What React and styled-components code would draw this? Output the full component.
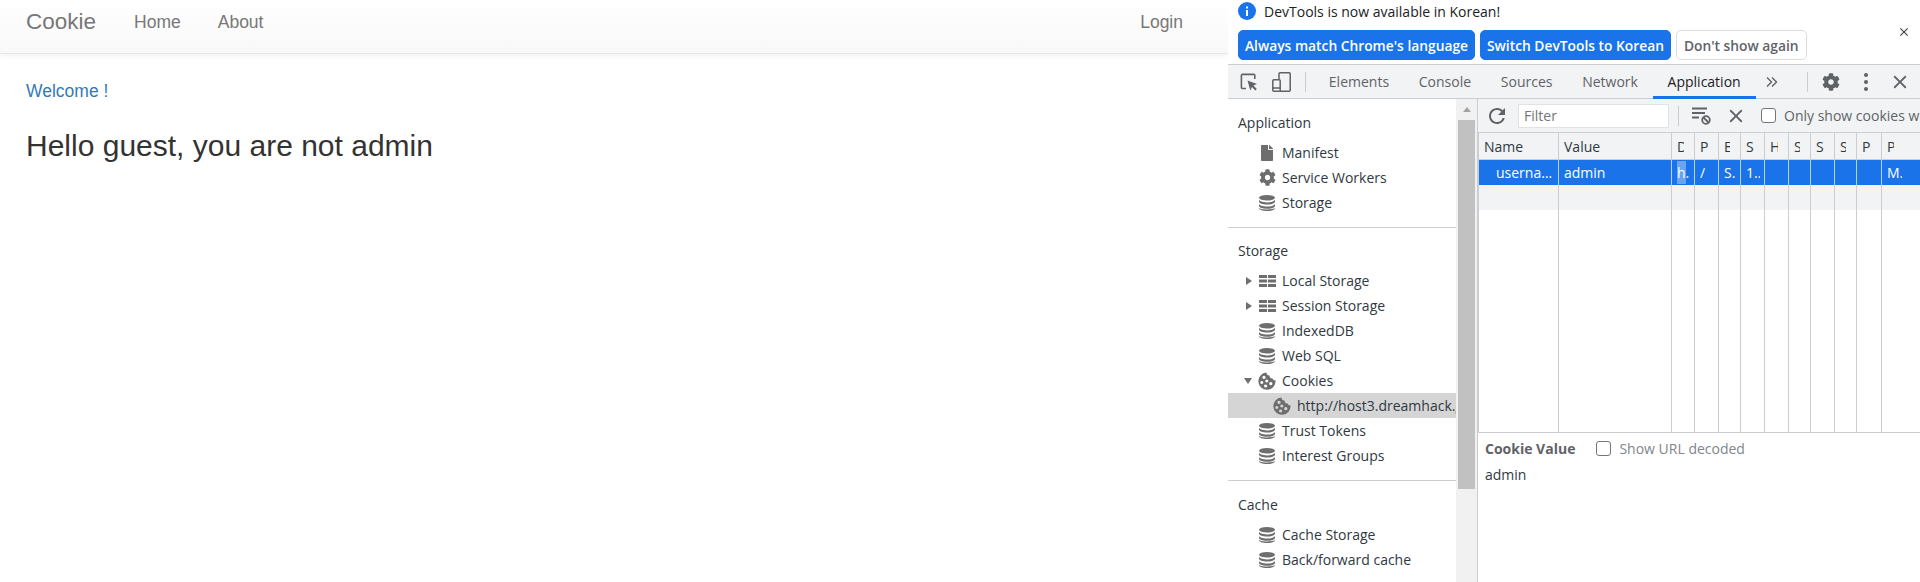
import React from "react"
import styled, { createGlobalStyle } from "styled-components"
import { FaCog, FaFile } from "react-icons/fa"
import { MdClose, MdRefresh } from "react-icons/md"

const GlobalStyle = createGlobalStyle`
  html, body {
    margin: 0;
    padding: 0;
    height: 582px;
    overflow: hidden;
    background: #fff;
  }
  * { box-sizing: border-box; }
`

const devFont = `"Open Sans", "Noto Sans", sans-serif`

const Shell = styled.div`
  display: flex;
  width: 1920px;
  height: 582px;
  overflow: hidden;
`

/* left: the page itself */
const Page = styled.div`
  width: 1228px;
  flex: 0 0 auto;
  font-family: "Liberation Sans", Arial, sans-serif;
  color: #333;
`

const Navbar = styled.div`
  height: 54px;
  display: flex;
  align-items: center;
  padding: 0 45px 9px 26px;
  background: linear-gradient(to bottom, #fff 0%, #f8f8f8 100%);
  border-bottom: 1px solid #e7e7e7;
  box-shadow: 0 1px 6px rgba(0, 0, 0, 0.075);
`

const Brand = styled.a`
  font-size: 22.5px;
  color: #777;
  margin-right: 38px;
  margin-top: -1px;
`

const NavLink = styled.a`
  font-size: 17.5px;
  color: #777;
  margin-right: ${props => (props.$end ? "0" : "37px")};
  margin-left: ${props => (props.$end ? "auto" : "0")};
`

const Content = styled.div`
  padding: 25px 26px 0;
`

const Welcome = styled.p`
  margin: 0 0 25px;
  font-size: 17.5px;
  line-height: 25px;
  color: #337ab7;
`

const Heading = styled.h3`
  margin: 0;
  font-size: 30px;
  font-weight: 500;
  line-height: 33px;
  color: #333;
`

/* right: devtools */
const DevTools = styled.div`
  width: 692px;
  flex: 0 0 auto;
  display: flex;
  flex-direction: column;
  font-family: ${devFont};
  font-size: 14px;
  color: #303942;
  background: #fff;
`

const InfoBar = styled.div`
  height: 65px;
  flex: 0 0 auto;
  display: flex;
  align-items: center;
  padding: 0 9px 0 10px;
  border-bottom: 1px solid #cacdd1;
`

const InfoBody = styled.div`
  display: flex;
  flex-direction: column;
  height: 64px;
`

const InfoLine = styled.div`
  height: 22px;
  display: flex;
  align-items: center;
  gap: 8px;
  color: #202124;
`

const InfoButtons = styled.div`
  display: flex;
  gap: 5px;
  margin-top: 8px;
`

const InfoButton = styled.button`
  height: 30px;
  padding: 0 ${props => (props.$plain ? "7px" : "6px")};
  border-radius: 5px;
  font-family: ${devFont};
  font-size: 13.8px;
  font-weight: 600;
  white-space: nowrap;
  background: ${props => (props.$plain ? "#fff" : "#1a73e8")};
  color: ${props => (props.$plain ? "#5f6368" : "#fff")};
  border: 1px solid ${props => (props.$plain ? "#dadce0" : "#1a73e8")};
`

const InfoClose = styled.div`
  margin-left: auto;
  display: flex;
  color: #3c4043;
`

const MainToolbar = styled.div`
  height: 34px;
  flex: 0 0 auto;
  display: flex;
  align-items: stretch;
  padding: 0 4px 0 4px;
  background: #f1f3f4;
  border-bottom: 1px solid #cacdd1;
`

const ToolSlot = styled.div`
  width: ${props => props.$w}px;
  flex: 0 0 auto;
  display: flex;
  align-items: center;
  justify-content: center;
  color: #5f6368;
`

const ToolSep = styled.div`
  width: 1px;
  height: 20px;
  align-self: center;
  background: #ccc;
  margin: ${props => props.$m};
  flex: 0 0 auto;
`

const Tab = styled.div`
  padding: 2px 14.85px 0;
  display: flex;
  align-items: center;
  height: 34px;
  white-space: nowrap;
  color: ${props => (props.$active ? "#202124" : "#5f6368")};
  border-bottom: 3px solid ${props => (props.$active ? "#1a73e8" : "transparent")};
`

const ToolRight = styled.div`
  margin-left: auto;
  display: flex;
  align-items: stretch;
`

const Body = styled.div`
  flex: 1 1 auto;
  min-height: 0;
  display: flex;
`

const Sidebar = styled.div`
  width: 228px;
  flex: 0 0 auto;
  overflow: hidden;
`

const Section = styled.div`
  padding: ${props => props.$top}px 0 12px;
  border-bottom: ${props => (props.$last ? "none" : "1px solid #cacdd1")};
`

const SectionTitle = styled.div`
  height: 25px;
  line-height: 25px;
  margin-bottom: 5px;
  padding-left: 10px;
  color: #303942;
`

const TreeRow = styled.div`
  height: 25px;
  display: flex;
  align-items: center;
  white-space: nowrap;
  overflow: hidden;
  padding-left: ${props => (props.$depth ? 32 : 17)}px;
  background: ${props => (props.$selected ? "#d5d5d5" : "transparent")};
`

const Caret = styled.div`
  width: 12px;
  flex: 0 0 auto;
  display: flex;
  align-items: center;
  &::before {
    content: "";
    display: ${props => (props.$dir ? "block" : "none")};
    margin-left: ${props => (props.$dir === "down" ? "-1px" : "1px")};
    border-style: solid;
    border-color: transparent;
    border-width: ${props =>
      props.$dir === "down" ? "6px 4.5px 0 4.5px" : "4.5px 0 4.5px 6px"};
    border-top-color: ${props => (props.$dir === "down" ? "#6e6e6e" : "transparent")};
    border-left-color: ${props => (props.$dir === "down" ? "transparent" : "#6e6e6e")};
    width: 0;
    height: 0;
  }
`

const TreeIcon = styled.div`
  width: 20px;
  flex: 0 0 auto;
  display: flex;
  align-items: center;
  justify-content: center;
  color: #6e6e6e;
`

const TreeLabel = styled.span`
  margin-left: 5px;
  color: #303942;
`

const Scrollbar = styled.div`
  width: 21px;
  flex: 0 0 auto;
  display: flex;
  flex-direction: column;
  padding: 0 2px;
  background: #f1f1f1;
`

const ScrollArrow = styled.div`
  height: 21px;
  flex: 0 0 auto;
  display: flex;
  align-items: center;
  justify-content: center;
  &::before {
    content: "";
    border-style: solid;
    border-width: 0 4.5px 5px 4.5px;
    border-color: transparent transparent #a3a3a3 transparent;
  }
`

const ScrollThumb = styled.div`
  height: 369px;
  background: #c1c1c1;
`

const Main = styled.div`
  flex: 1 1 auto;
  min-width: 0;
  display: flex;
  flex-direction: column;
  border-left: 1px solid #cacdd1;
`

const SubToolbar = styled.div`
  height: 34px;
  flex: 0 0 auto;
  display: flex;
  align-items: center;
  white-space: nowrap;
  overflow: hidden;
  background: #f1f3f4;
  border-bottom: 1px solid #cacdd1;
  padding-left: 2px;
`

const FilterInput = styled.div`
  width: 151px;
  height: 24px;
  flex: 0 0 auto;
  margin: 0 9px 0 4px;
  padding-left: 5px;
  line-height: 22px;
  background: #fff;
  border: 1px solid #e0e2e5;
  color: #757575;
`

const CheckBox = styled.span`
  width: 15px;
  height: 15px;
  flex: 0 0 auto;
  display: inline-block;
  border: 1px solid #767676;
  border-radius: 3px;
  background: #fff;
`

const CheckText = styled.span`
  margin-left: ${props => props.$gap}px;
  color: ${props => props.$color};
`

const Table = styled.div`
  flex: 1 1 auto;
  min-height: 0;
  display: flex;
  flex-direction: column;
  border-left: 1px solid #cacdd1;
  border-bottom: 1px solid #cacdd1;
`

const GridRow = styled.div`
  display: grid;
  grid-template-columns: 80px 113px 23px 24px 22px 24px 24px 22px 24px 22px 25px 1fr;
  height: ${props => props.$h};
  flex: ${props => (props.$grow ? "1 1 auto" : "0 0 auto")};
  background: ${props => props.$bg};
  color: ${props => (props.$selected ? "#fff" : "#303942")};
  border-bottom: ${props => (props.$header ? "1px solid #cacdd1" : "none")};
`

const Cell = styled.div`
  min-width: 0;
  display: flex;
  align-items: center;
  padding: 0 ${props => (props.$header ? "10px" : "4px")} 0 ${props => props.$pl || 5}px;
  border-right: 1px solid ${props => (props.$selected ? "#b8d0f3" : "#cacdd1")};
  &:last-child {
    border-right: none;
    padding-right: ${props => (props.$header ? "26px" : "18px")};
  }
`

const CellText = styled.span`
  display: block;
  min-width: 0;
  overflow: hidden;
  white-space: nowrap;
  text-overflow: ${props => (props.$clip ? "clip" : "ellipsis")};
`

const Mark = styled.span`
  display: inline-block;
  height: 23px;
  line-height: 23px;
  background: #6aa5f2;
`

const ValuePane = styled.div`
  height: 149px;
  flex: 0 0 auto;
  padding: 3px 7px 0;
`

const ValueHead = styled.div`
  height: 24px;
  display: flex;
  align-items: center;
  white-space: nowrap;
`

const ValueTitle = styled.strong`
  font-weight: 700;
  color: #5f6368;
  margin-right: 21px;
`

const ValueText = styled.div`
  margin-top: 4px;
  line-height: 22px;
  color: #303942;
`

const InfoIcon = () => (
  <svg width="18" height="18" viewBox="0 0 18 18">
    <circle cx="9" cy="9" r="9" fill="#1a73e8" />
    <rect x="8" y="8" width="2" height="6" fill="#fff" />
    <rect x="8" y="4.5" width="2" height="2" fill="#fff" />
  </svg>
)

const InspectIcon = () => (
  <svg width="18" height="18" viewBox="0 0 18 18" fill="none">
    <path d="M6 15.5H2.4a1 1 0 0 1-1-1V2.4a1 1 0 0 1 1-1h11.4a1 1 0 0 1 1 1V6" stroke="#5f6368" strokeWidth="1.6" />
    <path d="M7.5 7.5l9.5 3.4-3.6 1.7 3.4 3.4-1.4 1.4-3.4-3.4-1.7 3.6z" fill="#5f6368" />
  </svg>
)

const DeviceIcon = () => (
  <svg width="19" height="20" viewBox="0 0 19 20" fill="none" stroke="#5f6368" strokeWidth="1.5">
    <path d="M7 7V1.8a1 1 0 0 1 1-1h9.2a1 1 0 0 1 1 1v16.4a1 1 0 0 1-1 1H8" />
    <rect x="0.8" y="7.8" width="7.4" height="11.4" rx="1" />
    <path d="M1 16h7" />
  </svg>
)

const ChevronsIcon = () => (
  <svg width="12" height="12" viewBox="0 0 12 12" fill="none" stroke="#5f6368" strokeWidth="1.4">
    <path d="M1 1.5L5.5 6 1 10.5" />
    <path d="M6 1.5L10.5 6 6 10.5" />
  </svg>
)

const KebabIcon = () => (
  <svg width="4" height="18" viewBox="0 0 4 18" fill="#5f6368">
    <circle cx="2" cy="2" r="2" />
    <circle cx="2" cy="9" r="2" />
    <circle cx="2" cy="16" r="2" />
  </svg>
)

const ClearFilterIcon = () => (
  <svg width="19" height="18" viewBox="0 0 19 18" fill="none" stroke="#5f6368">
    <path d="M0 1.5h15M0 6h13M0 10.5h7" strokeWidth="2" />
    <circle cx="14" cy="13" r="3.8" strokeWidth="1.8" />
    <path d="M11.5 10.5l5 5" strokeWidth="1.8" />
  </svg>
)

const GridIcon = () => (
  <svg width="17" height="12" viewBox="0 0 17 12" fill="#6e6e6e">
    <rect x="0" y="0" width="8" height="3" />
    <rect x="9" y="0" width="8" height="3" />
    <rect x="0" y="4.5" width="8" height="3" />
    <rect x="9" y="4.5" width="8" height="3" />
    <rect x="0" y="9" width="8" height="3" />
    <rect x="9" y="9" width="8" height="3" />
  </svg>
)

const DatabaseIcon = () => (
  <svg width="16" height="16" viewBox="0 0 16 16" fill="#6e6e6e">
    <ellipse cx="8" cy="2.8" rx="8" ry="2.8" />
    <path d="M0 4.6c0 1.6 3.6 2.8 8 2.8s8-1.2 8-2.8v2.2c0 1.6-3.6 2.8-8 2.8S0 8.4 0 6.8z" />
    <path d="M0 8.8c0 1.6 3.6 2.8 8 2.8s8-1.2 8-2.8V11c0 1.6-3.6 2.8-8 2.8S0 12.6 0 11z" />
    <path d="M0 12.4c0 1.2 3.6 2 8 2s8-.8 8-2v.8c0 1.6-3.6 2.8-8 2.8S0 14.8 0 13.2z" />
  </svg>
)

const CookieIcon = () => (
  <svg width="18" height="18" viewBox="0 0 18 18" fill="#6e6e6e">
    <path
      fillRule="evenodd"
      d="M8.5 .6a3 3 0 0 0 3 3 3 3 0 0 0 3 3 2.5 2.5 0 0 0 3 1.7A8.6 8.6 0 1 1 8.5 .6z
         M6 3.8a1.6 1.6 0 1 0 .01 0z
         M3.8 9a1.5 1.5 0 1 0 .01 0z
         M8.8 7.6a1.5 1.5 0 1 0 .01 0z
         M12.8 10a1.6 1.6 0 1 0 .01 0z
         M7.6 12.4a1.6 1.6 0 1 0 .01 0z"
    />
  </svg>
)

const treeIcons = {
  file: <FaFile size={16} />,
  cog: <FaCog size={17} />,
  db: <DatabaseIcon />,
  grid: <GridIcon />,
  cookie: <CookieIcon />,
}

const sections = [
  {
    title: "Application",
    top: 11,
    rows: [
      { icon: "file", label: "Manifest" },
      { icon: "cog", label: "Service Workers" },
      { icon: "db", label: "Storage" },
    ],
  },
  {
    title: "Storage",
    top: 10,
    rows: [
      { icon: "grid", label: "Local Storage", caret: "right" },
      { icon: "grid", label: "Session Storage", caret: "right" },
      { icon: "db", label: "IndexedDB" },
      { icon: "db", label: "Web SQL" },
      { icon: "cookie", label: "Cookies", caret: "down" },
      { icon: "cookie", label: "http://host3.dreamhack.games:8000", depth: 1, selected: true },
      { icon: "db", label: "Trust Tokens" },
      { icon: "db", label: "Interest Groups" },
    ],
  },
  {
    title: "Cache",
    top: 11,
    rows: [
      { icon: "db", label: "Cache Storage" },
      { icon: "db", label: "Back/forward cache" },
    ],
  },
]

const headers = ["Name", "Value", "Domain", "Path", "Expires", "Size", "HttpOnly", "Secure", "SameSite", "SameParty", "Partition", "Priority"]
const cookie = ["username", "admin", "host3.dreamhack.games", "/", "Session", "13", "", "", "", "", "", "Medium"]
const blanks = headers.map(() => "")

const App = () => (
  <Shell>
    <GlobalStyle />
    <Page>
      <Navbar>
        <Brand>Cookie</Brand>
        <NavLink>Home</NavLink>
        <NavLink>About</NavLink>
        <NavLink $end>Login</NavLink>
      </Navbar>
      <Content>
        <Welcome>Welcome !</Welcome>
        <Heading>Hello guest, you are not admin</Heading>
      </Content>
    </Page>
    <DevTools>
      <InfoBar>
        <InfoBody>
          <InfoLine>
            <InfoIcon />
            <span>DevTools is now available in Korean!</span>
          </InfoLine>
          <InfoButtons>
            <InfoButton>Always match Chrome's language</InfoButton>
            <InfoButton>Switch DevTools to Korean</InfoButton>
            <InfoButton $plain>Don't show again</InfoButton>
          </InfoButtons>
        </InfoBody>
        <InfoClose>
          <MdClose size={14} />
        </InfoClose>
      </InfoBar>
      <MainToolbar>
        <ToolSlot $w={33}><InspectIcon /></ToolSlot>
        <ToolSlot $w={33}><DeviceIcon /></ToolSlot>
        <ToolSep $m="0 8px 0 7px" />
        <Tab>Elements</Tab>
        <Tab>Console</Tab>
        <Tab>Sources</Tab>
        <Tab>Network</Tab>
        <Tab $active>Application</Tab>
        <ToolSlot $w={33}><ChevronsIcon /></ToolSlot>
        <ToolRight>
          <ToolSep $m="0 6px 0 0" />
          <ToolSlot $w={34}><FaCog size={18} /></ToolSlot>
          <ToolSlot $w={36}><KebabIcon /></ToolSlot>
          <ToolSlot $w={32}><MdClose size={22} /></ToolSlot>
        </ToolRight>
      </MainToolbar>
      <Body>
        <Sidebar>
          {sections.map((section, i) => (
            <Section key={section.title} $top={section.top} $last={i === sections.length - 1}>
              <SectionTitle>{section.title}</SectionTitle>
              {section.rows.map(row => (
                <TreeRow key={row.label} $depth={row.depth} $selected={row.selected}>
                  <Caret $dir={row.caret} />
                  <TreeIcon>{treeIcons[row.icon]}</TreeIcon>
                  <TreeLabel>{row.label}</TreeLabel>
                </TreeRow>
              ))}
            </Section>
          ))}
        </Sidebar>
        <Scrollbar>
          <ScrollArrow />
          <ScrollThumb />
        </Scrollbar>
        <Main>
          <SubToolbar>
            <ToolSlot $w={34}><MdRefresh size={24} /></ToolSlot>
            <FilterInput>Filter</FilterInput>
            <ToolSep $m="0 13px 0 0" />
            <ToolSlot $w={19}><ClearFilterIcon /></ToolSlot>
            <ToolSlot $w={50}><MdClose size={22} /></ToolSlot>
            <CheckBox />
            <CheckText $gap={8} $color="#5f6368">Only show cookies with an issue</CheckText>
          </SubToolbar>
          <Table>
            <GridRow $h="27px" $bg="#f1f3f4" $header>
              {headers.map(text => (
                <Cell key={text} $header>
                  <CellText $clip>{text}</CellText>
                </Cell>
              ))}
            </GridRow>
            <GridRow $h="25px" $bg="#1a73e8" $selected>
              {cookie.map((text, i) => (
                <Cell key={headers[i]} $selected $pl={i === 0 ? 17 : 5}>
                  {i === 2 ? (
                    <CellText><Mark>{text[0]}</Mark>{text.slice(1)}</CellText>
                  ) : (
                    <CellText>{text}</CellText>
                  )}
                </Cell>
              ))}
            </GridRow>
            <GridRow $h="25px" $bg="#f1f3f4">
              {blanks.map((_, i) => <Cell key={i} />)}
            </GridRow>
            <GridRow $grow $bg="#fff">
              {blanks.map((_, i) => <Cell key={i} />)}
            </GridRow>
          </Table>
          <ValuePane>
            <ValueHead>
              <ValueTitle>Cookie Value</ValueTitle>
              <CheckBox />
              <CheckText $gap={8} $color="#80868b">Show URL decoded</CheckText>
            </ValueHead>
            <ValueText>admin</ValueText>
          </ValuePane>
        </Main>
      </Body>
    </DevTools>
  </Shell>
)

export default App
